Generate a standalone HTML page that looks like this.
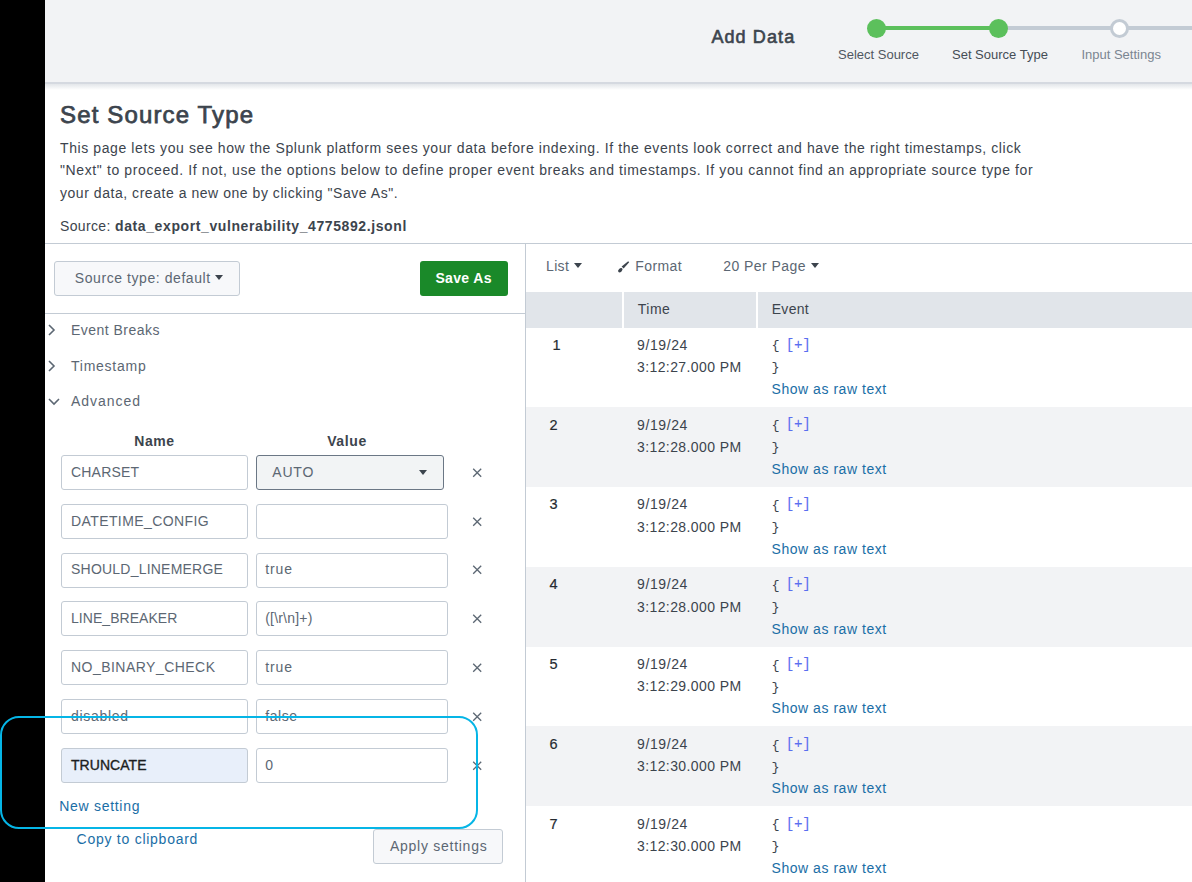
<!DOCTYPE html>
<html><head><meta charset="utf-8"><style>
html,body{margin:0;padding:0;width:1192px;height:882px;overflow:hidden;background:#fff;position:relative}
body>div,body>svg{position:absolute}
.t{white-space:nowrap;font-family:"Liberation Sans",sans-serif}
</style></head><body>
<div style="left:0px;top:0px;width:45px;height:882px;background:#000"></div>
<div style="left:45px;top:0px;width:1147px;height:82px;background:#f2f3f5"></div>
<div style="left:45px;top:82px;width:1147px;height:2px;background:#d5d9e0"></div>
<div style="left:45px;top:84px;width:1147px;height:6px;background:linear-gradient(#e3e6ea,#ffffff)"></div>
<div class="t" style="left:711.4px;top:28.00px;font-size:18px;line-height:18px;font-weight:400;color:#3c444d;letter-spacing:1.1px;font-family:'Liberation Sans',sans-serif;-webkit-text-stroke:0.6px #3c444d">Add Data</div>
<div style="left:876px;top:26.3px;width:122px;height:3.4px;background:#5cc05c"></div>
<div style="left:998px;top:26.3px;width:194px;height:3.4px;background:#c3cbd4"></div>
<div style="left:867.2px;top:18.7px;width:19px;height:19px;background:#5cc05c;border-radius:50%"></div>
<div style="left:989.1px;top:18.7px;width:19px;height:19px;background:#5cc05c;border-radius:50%"></div>
<div style="left:1109.5px;top:18.7px;width:19px;height:19px;background:#fff;border:3.3px solid #c3cbd4;border-radius:50%;box-sizing:border-box"></div>
<div class="t" style="left:838px;top:48.00px;font-size:13px;line-height:13px;font-weight:400;color:#4f5761;letter-spacing:0px;font-family:'Liberation Sans',sans-serif;">Select Source</div>
<div class="t" style="left:952px;top:48.00px;font-size:13px;line-height:13px;font-weight:400;color:#454d56;letter-spacing:0px;font-family:'Liberation Sans',sans-serif;">Set Source Type</div>
<div class="t" style="left:1081.4px;top:48.00px;font-size:13px;line-height:13px;font-weight:400;color:#7b8591;letter-spacing:0px;font-family:'Liberation Sans',sans-serif;">Input Settings</div>
<div class="t" style="left:60px;top:103.00px;font-size:24px;line-height:24px;font-weight:400;color:#3c444d;letter-spacing:1.15px;font-family:'Liberation Sans',sans-serif;-webkit-text-stroke:0.75px #3c444d">Set Source Type</div>
<div class="t" style="left:60px;top:141.10px;font-size:14px;line-height:14px;font-weight:400;color:#3c444d;letter-spacing:0.6px;font-family:'Liberation Sans',sans-serif;">This page lets you see how the Splunk platform sees your data before indexing. If the events look correct and have the right timestamps, click</div>
<div class="t" style="left:60px;top:163.30px;font-size:14px;line-height:14px;font-weight:400;color:#3c444d;letter-spacing:0.615px;font-family:'Liberation Sans',sans-serif;">&quot;Next&quot; to proceed. If not, use the options below to define proper event breaks and timestamps. If you cannot find an appropriate source type for</div>
<div class="t" style="left:60px;top:185.50px;font-size:14px;line-height:14px;font-weight:400;color:#3c444d;letter-spacing:0.54px;font-family:'Liberation Sans',sans-serif;">your data, create a new one by clicking &quot;Save As&quot;.</div>
<div class="t" style="left:60px;top:218.70px;font-size:14px;line-height:14px;font-weight:400;color:#3c444d;letter-spacing:0.36px;font-family:'Liberation Sans',sans-serif;">Source: <b style="letter-spacing:0.6px">data_export_vulnerability_4775892.jsonl</b></div>
<div style="left:45px;top:243px;width:1147px;height:1px;background:#c3cbd4"></div>
<div style="left:525px;top:243px;width:1px;height:639px;background:#c3cbd4"></div>
<div style="left:45px;top:313px;width:480px;height:1px;background:#c3cbd4"></div>
<div style="left:54px;top:261px;width:186px;height:35px;background:#f7f8fa;border:1px solid #c3cbd4;border-radius:3px;box-sizing:border-box"></div>
<div class="t" style="left:74.8px;top:270.80px;font-size:14px;line-height:14px;font-weight:400;color:#5c6773;letter-spacing:0.57px;font-family:'Liberation Sans',sans-serif;">Source type: default</div>
<div style="left:215px;top:275px;width:0;height:0;border-left:4px solid transparent;border-right:4px solid transparent;border-top:5px solid #3c444d"></div>
<div style="left:420px;top:261px;width:88px;height:35px;background:#1a8929;border-radius:3px"></div>
<div class="t" style="left:435.4px;top:270.90px;font-size:14px;line-height:14px;font-weight:700;color:#fff;letter-spacing:0.35px;font-family:'Liberation Sans',sans-serif;">Save As</div>
<svg style="left:47px;top:323px" width="10" height="14"><path d="M2 2 L7 7 L2 12" fill="none" stroke="#5c6773" stroke-width="1.6"/></svg>
<div class="t" style="left:71px;top:322.90px;font-size:14px;line-height:14px;font-weight:400;color:#5c6773;letter-spacing:0.47px;font-family:'Liberation Sans',sans-serif;">Event Breaks</div>
<svg style="left:47px;top:359px" width="10" height="14"><path d="M2 2 L7 7 L2 12" fill="none" stroke="#5c6773" stroke-width="1.6"/></svg>
<div class="t" style="left:71px;top:358.70px;font-size:14px;line-height:14px;font-weight:400;color:#5c6773;letter-spacing:0.75px;font-family:'Liberation Sans',sans-serif;">Timestamp</div>
<svg style="left:47px;top:397px" width="14" height="10"><path d="M2 2 L7 7 L12 2" fill="none" stroke="#5c6773" stroke-width="1.6"/></svg>
<div class="t" style="left:71px;top:393.80px;font-size:14px;line-height:14px;font-weight:400;color:#5c6773;letter-spacing:0.95px;font-family:'Liberation Sans',sans-serif;">Advanced</div>
<div class="t" style="left:134.2px;top:433.80px;font-size:14px;line-height:14px;font-weight:700;color:#3c444d;letter-spacing:0.6px;font-family:'Liberation Sans',sans-serif;">Name</div>
<div class="t" style="left:327.2px;top:434.00px;font-size:14px;line-height:14px;font-weight:700;color:#3c444d;letter-spacing:0.6px;font-family:'Liberation Sans',sans-serif;">Value</div>
<div style="left:61px;top:455px;width:187px;height:35px;background:#fff;border:1px solid #c3cbd4;border-radius:3px;box-sizing:border-box"></div>
<div class="t" style="left:71px;top:464.80px;font-size:14px;line-height:14px;font-weight:400;color:#5c6773;letter-spacing:0.2px;font-family:'Liberation Sans',sans-serif;">CHARSET</div>
<div style="left:256px;top:455px;width:188px;height:35px;background:#f2f4f5;border:1px solid #6b7785;border-radius:3px;box-sizing:border-box"></div>
<div class="t" style="left:272.3px;top:464.80px;font-size:14px;line-height:14px;font-weight:400;color:#5c6773;letter-spacing:0.8px;font-family:'Liberation Sans',sans-serif;">AUTO</div>
<div style="left:419px;top:470px;width:0;height:0;border-left:4.5px solid transparent;border-right:4.5px solid transparent;border-top:5px solid #3c444d"></div>
<svg style="left:472px;top:466.8px" width="11" height="11"><path d="M1.2 1.8 L9.2 9.8 M9.2 1.8 L1.2 9.8" stroke="#5c6773" stroke-width="1.3"/></svg>
<div style="left:61px;top:504px;width:187px;height:35px;background:#fff;border:1px solid #c3cbd4;border-radius:3px;box-sizing:border-box"></div>
<div class="t" style="left:71px;top:513.60px;font-size:14px;line-height:14px;font-weight:400;color:#5c6773;letter-spacing:0.4px;font-family:'Liberation Sans',sans-serif;">DATETIME_CONFIG</div>
<div style="left:256px;top:504px;width:192px;height:35px;background:#fff;border:1px solid #c3cbd4;border-radius:3px;box-sizing:border-box"></div>
<svg style="left:472px;top:515.6px" width="11" height="11"><path d="M1.2 1.8 L9.2 9.8 M9.2 1.8 L1.2 9.8" stroke="#5c6773" stroke-width="1.3"/></svg>
<div style="left:61px;top:553px;width:187px;height:35px;background:#fff;border:1px solid #c3cbd4;border-radius:3px;box-sizing:border-box"></div>
<div class="t" style="left:71px;top:562.40px;font-size:14px;line-height:14px;font-weight:400;color:#5c6773;letter-spacing:0.22px;font-family:'Liberation Sans',sans-serif;">SHOULD_LINEMERGE</div>
<div style="left:256px;top:553px;width:192px;height:35px;background:#fff;border:1px solid #c3cbd4;border-radius:3px;box-sizing:border-box"></div>
<div class="t" style="left:265.2px;top:562.40px;font-size:14px;line-height:14px;font-weight:400;color:#5c6773;letter-spacing:0.9px;font-family:'Liberation Sans',sans-serif;">true</div>
<svg style="left:472px;top:564.4px" width="11" height="11"><path d="M1.2 1.8 L9.2 9.8 M9.2 1.8 L1.2 9.8" stroke="#5c6773" stroke-width="1.3"/></svg>
<div style="left:61px;top:601px;width:187px;height:35px;background:#fff;border:1px solid #c3cbd4;border-radius:3px;box-sizing:border-box"></div>
<div class="t" style="left:71px;top:611.20px;font-size:14px;line-height:14px;font-weight:400;color:#5c6773;letter-spacing:0.05px;font-family:'Liberation Sans',sans-serif;">LINE_BREAKER</div>
<div style="left:256px;top:601px;width:192px;height:35px;background:#fff;border:1px solid #c3cbd4;border-radius:3px;box-sizing:border-box"></div>
<div class="t" style="left:265.2px;top:611.20px;font-size:14px;line-height:14px;font-weight:400;color:#5c6773;letter-spacing:0.2px;font-family:'Liberation Sans',sans-serif;">([\r\n]+)</div>
<svg style="left:472px;top:613.2px" width="11" height="11"><path d="M1.2 1.8 L9.2 9.8 M9.2 1.8 L1.2 9.8" stroke="#5c6773" stroke-width="1.3"/></svg>
<div style="left:61px;top:650px;width:187px;height:35px;background:#fff;border:1px solid #c3cbd4;border-radius:3px;box-sizing:border-box"></div>
<div class="t" style="left:71px;top:660.00px;font-size:14px;line-height:14px;font-weight:400;color:#5c6773;letter-spacing:0.47px;font-family:'Liberation Sans',sans-serif;">NO_BINARY_CHECK</div>
<div style="left:256px;top:650px;width:192px;height:35px;background:#fff;border:1px solid #c3cbd4;border-radius:3px;box-sizing:border-box"></div>
<div class="t" style="left:265.2px;top:660.00px;font-size:14px;line-height:14px;font-weight:400;color:#5c6773;letter-spacing:0.9px;font-family:'Liberation Sans',sans-serif;">true</div>
<svg style="left:472px;top:662.0px" width="11" height="11"><path d="M1.2 1.8 L9.2 9.8 M9.2 1.8 L1.2 9.8" stroke="#5c6773" stroke-width="1.3"/></svg>
<div style="left:61px;top:699px;width:187px;height:35px;background:#fff;border:1px solid #c3cbd4;border-radius:3px;box-sizing:border-box"></div>
<div class="t" style="left:71px;top:708.80px;font-size:14px;line-height:14px;font-weight:400;color:#5c6773;letter-spacing:0.7px;font-family:'Liberation Sans',sans-serif;">disabled</div>
<div style="left:256px;top:699px;width:192px;height:35px;background:#fff;border:1px solid #c3cbd4;border-radius:3px;box-sizing:border-box"></div>
<div class="t" style="left:265.2px;top:708.80px;font-size:14px;line-height:14px;font-weight:400;color:#5c6773;letter-spacing:0.6px;font-family:'Liberation Sans',sans-serif;">false</div>
<svg style="left:472px;top:710.8px" width="11" height="11"><path d="M1.2 1.8 L9.2 9.8 M9.2 1.8 L1.2 9.8" stroke="#5c6773" stroke-width="1.3"/></svg>
<div style="left:61px;top:748px;width:187px;height:35px;background:#e8effa;border:1px solid #c3cbd4;border-radius:3px;box-sizing:border-box"></div>
<div class="t" style="left:71px;top:757.60px;font-size:14px;line-height:14px;font-weight:400;color:#1c1e21;letter-spacing:0.05px;font-family:'Liberation Sans',sans-serif;-webkit-text-stroke:0.35px #1c1e21">TRUNCATE</div>
<div style="left:256px;top:748px;width:192px;height:35px;background:#fff;border:1px solid #c3cbd4;border-radius:3px;box-sizing:border-box"></div>
<div class="t" style="left:265.2px;top:757.60px;font-size:14px;line-height:14px;font-weight:400;color:#5c6773;letter-spacing:0.2px;font-family:'Liberation Sans',sans-serif;">0</div>
<svg style="left:472px;top:759.5999999999999px" width="11" height="11"><path d="M1.2 1.8 L9.2 9.8 M9.2 1.8 L1.2 9.8" stroke="#5c6773" stroke-width="1.3"/></svg>
<div class="t" style="left:59.3px;top:799.30px;font-size:14px;line-height:14px;font-weight:400;color:#1a6ea6;letter-spacing:0.7px;font-family:'Liberation Sans',sans-serif;">New setting</div>
<div class="t" style="left:76.6px;top:832.30px;font-size:14px;line-height:14px;font-weight:400;color:#1a6ea6;letter-spacing:0.74px;font-family:'Liberation Sans',sans-serif;">Copy to clipboard</div>
<div style="left:373px;top:829px;width:130px;height:35px;background:#f7f8fa;border:1px solid #c3cbd4;border-radius:3px;box-sizing:border-box"></div>
<div class="t" style="left:390px;top:839.00px;font-size:14px;line-height:14px;font-weight:400;color:#5c6773;letter-spacing:0.73px;font-family:'Liberation Sans',sans-serif;">Apply settings</div>
<div class="t" style="left:546.1px;top:258.60px;font-size:14px;line-height:14px;font-weight:400;color:#5c6773;letter-spacing:0.3px;font-family:'Liberation Sans',sans-serif;">List</div>
<div style="left:574px;top:263.4px;width:0;height:0;border-left:4px solid transparent;border-right:4px solid transparent;border-top:5px solid #3c444d"></div>
<svg style="left:612px;top:255px" width="22" height="22"><path d="M16.2 6.2 L17.2 7.2 L11.6 13.4 L9.6 11.6 Z" fill="#3c444d"/><ellipse cx="8.3" cy="15.2" rx="2.6" ry="1.7" transform="rotate(-45 8.3 15.2)" fill="#3c444d"/></svg>
<div class="t" style="left:635.2px;top:259.30px;font-size:14px;line-height:14px;font-weight:400;color:#5c6773;letter-spacing:0.43px;font-family:'Liberation Sans',sans-serif;">Format</div>
<div class="t" style="left:723.2px;top:258.80px;font-size:14px;line-height:14px;font-weight:400;color:#5c6773;letter-spacing:0.44px;font-family:'Liberation Sans',sans-serif;">20 Per Page</div>
<div style="left:811px;top:263.4px;width:0;height:0;border-left:4px solid transparent;border-right:4px solid transparent;border-top:5px solid #3c444d"></div>
<div style="left:526px;top:292px;width:666px;height:36px;background:#e1e5ea"></div>
<div style="left:622px;top:292px;width:2px;height:36px;background:#fff"></div>
<div style="left:756px;top:292px;width:2px;height:36px;background:#fff"></div>
<div class="t" style="left:637.8px;top:302.00px;font-size:14px;line-height:14px;font-weight:400;color:#3c444d;letter-spacing:0.5px;font-family:'Liberation Sans',sans-serif;">Time</div>
<div class="t" style="left:771.7px;top:302.00px;font-size:14px;line-height:14px;font-weight:400;color:#3c444d;letter-spacing:0.3px;font-family:'Liberation Sans',sans-serif;">Event</div>
<div class="t" style="left:552.5px;top:337.80px;font-size:14.5px;line-height:14.5px;font-weight:400;color:#262b31;letter-spacing:0px;font-family:'Liberation Sans',sans-serif;-webkit-text-stroke:0.2px #262b31">1</div>
<div class="t" style="left:637px;top:337.80px;font-size:14px;line-height:14px;font-weight:400;color:#3c444d;letter-spacing:0.6px;font-family:'Liberation Sans',sans-serif;">9/19/24</div>
<div class="t" style="left:637px;top:360.00px;font-size:14px;line-height:14px;font-weight:400;color:#3c444d;letter-spacing:0.4px;font-family:'Liberation Sans',sans-serif;">3:12:27.000 PM</div>
<div class="t" style="left:771.5px;top:339.30px;font-size:13.5px;line-height:13.5px;font-weight:400;color:#3c444d;letter-spacing:0px;font-family:'Liberation Mono',monospace;">{</div>
<div class="t" style="left:785.8px;top:337.60px;font-size:14.2px;line-height:14.2px;font-weight:400;color:#5a6ef0;letter-spacing:-0.3px;font-family:'Liberation Mono',monospace;-webkit-text-stroke:0.1px #5a6ef0">[+]</div>
<div class="t" style="left:771.5px;top:361.30px;font-size:13.5px;line-height:13.5px;font-weight:400;color:#3c444d;letter-spacing:0px;font-family:'Liberation Mono',monospace;">}</div>
<div class="t" style="left:771.5px;top:382.00px;font-size:14px;line-height:14px;font-weight:400;color:#1a6ea6;letter-spacing:0.54px;font-family:'Liberation Sans',sans-serif;">Show as raw text</div>
<div style="left:526px;top:407px;width:666px;height:80px;background:#f2f3f5"></div>
<div class="t" style="left:549.4px;top:417.64px;font-size:14.5px;line-height:14.5px;font-weight:400;color:#262b31;letter-spacing:0px;font-family:'Liberation Sans',sans-serif;-webkit-text-stroke:0.2px #262b31">2</div>
<div class="t" style="left:637px;top:417.64px;font-size:14px;line-height:14px;font-weight:400;color:#3c444d;letter-spacing:0.6px;font-family:'Liberation Sans',sans-serif;">9/19/24</div>
<div class="t" style="left:637px;top:439.84px;font-size:14px;line-height:14px;font-weight:400;color:#3c444d;letter-spacing:0.4px;font-family:'Liberation Sans',sans-serif;">3:12:28.000 PM</div>
<div class="t" style="left:771.5px;top:419.14px;font-size:13.5px;line-height:13.5px;font-weight:400;color:#3c444d;letter-spacing:0px;font-family:'Liberation Mono',monospace;">{</div>
<div class="t" style="left:785.8px;top:417.44px;font-size:14.2px;line-height:14.2px;font-weight:400;color:#5a6ef0;letter-spacing:-0.3px;font-family:'Liberation Mono',monospace;-webkit-text-stroke:0.1px #5a6ef0">[+]</div>
<div class="t" style="left:771.5px;top:441.14px;font-size:13.5px;line-height:13.5px;font-weight:400;color:#3c444d;letter-spacing:0px;font-family:'Liberation Mono',monospace;">}</div>
<div class="t" style="left:771.5px;top:461.84px;font-size:14px;line-height:14px;font-weight:400;color:#1a6ea6;letter-spacing:0.54px;font-family:'Liberation Sans',sans-serif;">Show as raw text</div>
<div class="t" style="left:549.4px;top:497.48px;font-size:14.5px;line-height:14.5px;font-weight:400;color:#262b31;letter-spacing:0px;font-family:'Liberation Sans',sans-serif;-webkit-text-stroke:0.2px #262b31">3</div>
<div class="t" style="left:637px;top:497.48px;font-size:14px;line-height:14px;font-weight:400;color:#3c444d;letter-spacing:0.6px;font-family:'Liberation Sans',sans-serif;">9/19/24</div>
<div class="t" style="left:637px;top:519.68px;font-size:14px;line-height:14px;font-weight:400;color:#3c444d;letter-spacing:0.4px;font-family:'Liberation Sans',sans-serif;">3:12:28.000 PM</div>
<div class="t" style="left:771.5px;top:498.98px;font-size:13.5px;line-height:13.5px;font-weight:400;color:#3c444d;letter-spacing:0px;font-family:'Liberation Mono',monospace;">{</div>
<div class="t" style="left:785.8px;top:497.28px;font-size:14.2px;line-height:14.2px;font-weight:400;color:#5a6ef0;letter-spacing:-0.3px;font-family:'Liberation Mono',monospace;-webkit-text-stroke:0.1px #5a6ef0">[+]</div>
<div class="t" style="left:771.5px;top:520.98px;font-size:13.5px;line-height:13.5px;font-weight:400;color:#3c444d;letter-spacing:0px;font-family:'Liberation Mono',monospace;">}</div>
<div class="t" style="left:771.5px;top:541.68px;font-size:14px;line-height:14px;font-weight:400;color:#1a6ea6;letter-spacing:0.54px;font-family:'Liberation Sans',sans-serif;">Show as raw text</div>
<div style="left:526px;top:567px;width:666px;height:80px;background:#f2f3f5"></div>
<div class="t" style="left:549.4px;top:577.32px;font-size:14.5px;line-height:14.5px;font-weight:400;color:#262b31;letter-spacing:0px;font-family:'Liberation Sans',sans-serif;-webkit-text-stroke:0.2px #262b31">4</div>
<div class="t" style="left:637px;top:577.32px;font-size:14px;line-height:14px;font-weight:400;color:#3c444d;letter-spacing:0.6px;font-family:'Liberation Sans',sans-serif;">9/19/24</div>
<div class="t" style="left:637px;top:599.52px;font-size:14px;line-height:14px;font-weight:400;color:#3c444d;letter-spacing:0.4px;font-family:'Liberation Sans',sans-serif;">3:12:28.000 PM</div>
<div class="t" style="left:771.5px;top:578.82px;font-size:13.5px;line-height:13.5px;font-weight:400;color:#3c444d;letter-spacing:0px;font-family:'Liberation Mono',monospace;">{</div>
<div class="t" style="left:785.8px;top:577.12px;font-size:14.2px;line-height:14.2px;font-weight:400;color:#5a6ef0;letter-spacing:-0.3px;font-family:'Liberation Mono',monospace;-webkit-text-stroke:0.1px #5a6ef0">[+]</div>
<div class="t" style="left:771.5px;top:600.82px;font-size:13.5px;line-height:13.5px;font-weight:400;color:#3c444d;letter-spacing:0px;font-family:'Liberation Mono',monospace;">}</div>
<div class="t" style="left:771.5px;top:621.52px;font-size:14px;line-height:14px;font-weight:400;color:#1a6ea6;letter-spacing:0.54px;font-family:'Liberation Sans',sans-serif;">Show as raw text</div>
<div class="t" style="left:549.4px;top:657.16px;font-size:14.5px;line-height:14.5px;font-weight:400;color:#262b31;letter-spacing:0px;font-family:'Liberation Sans',sans-serif;-webkit-text-stroke:0.2px #262b31">5</div>
<div class="t" style="left:637px;top:657.16px;font-size:14px;line-height:14px;font-weight:400;color:#3c444d;letter-spacing:0.6px;font-family:'Liberation Sans',sans-serif;">9/19/24</div>
<div class="t" style="left:637px;top:679.36px;font-size:14px;line-height:14px;font-weight:400;color:#3c444d;letter-spacing:0.4px;font-family:'Liberation Sans',sans-serif;">3:12:29.000 PM</div>
<div class="t" style="left:771.5px;top:658.66px;font-size:13.5px;line-height:13.5px;font-weight:400;color:#3c444d;letter-spacing:0px;font-family:'Liberation Mono',monospace;">{</div>
<div class="t" style="left:785.8px;top:656.96px;font-size:14.2px;line-height:14.2px;font-weight:400;color:#5a6ef0;letter-spacing:-0.3px;font-family:'Liberation Mono',monospace;-webkit-text-stroke:0.1px #5a6ef0">[+]</div>
<div class="t" style="left:771.5px;top:680.66px;font-size:13.5px;line-height:13.5px;font-weight:400;color:#3c444d;letter-spacing:0px;font-family:'Liberation Mono',monospace;">}</div>
<div class="t" style="left:771.5px;top:701.36px;font-size:14px;line-height:14px;font-weight:400;color:#1a6ea6;letter-spacing:0.54px;font-family:'Liberation Sans',sans-serif;">Show as raw text</div>
<div style="left:526px;top:726px;width:666px;height:80px;background:#f2f3f5"></div>
<div class="t" style="left:549.4px;top:737.00px;font-size:14.5px;line-height:14.5px;font-weight:400;color:#262b31;letter-spacing:0px;font-family:'Liberation Sans',sans-serif;-webkit-text-stroke:0.2px #262b31">6</div>
<div class="t" style="left:637px;top:737.00px;font-size:14px;line-height:14px;font-weight:400;color:#3c444d;letter-spacing:0.6px;font-family:'Liberation Sans',sans-serif;">9/19/24</div>
<div class="t" style="left:637px;top:759.20px;font-size:14px;line-height:14px;font-weight:400;color:#3c444d;letter-spacing:0.4px;font-family:'Liberation Sans',sans-serif;">3:12:30.000 PM</div>
<div class="t" style="left:771.5px;top:738.50px;font-size:13.5px;line-height:13.5px;font-weight:400;color:#3c444d;letter-spacing:0px;font-family:'Liberation Mono',monospace;">{</div>
<div class="t" style="left:785.8px;top:736.80px;font-size:14.2px;line-height:14.2px;font-weight:400;color:#5a6ef0;letter-spacing:-0.3px;font-family:'Liberation Mono',monospace;-webkit-text-stroke:0.1px #5a6ef0">[+]</div>
<div class="t" style="left:771.5px;top:760.50px;font-size:13.5px;line-height:13.5px;font-weight:400;color:#3c444d;letter-spacing:0px;font-family:'Liberation Mono',monospace;">}</div>
<div class="t" style="left:771.5px;top:781.20px;font-size:14px;line-height:14px;font-weight:400;color:#1a6ea6;letter-spacing:0.54px;font-family:'Liberation Sans',sans-serif;">Show as raw text</div>
<div class="t" style="left:549.4px;top:816.84px;font-size:14.5px;line-height:14.5px;font-weight:400;color:#262b31;letter-spacing:0px;font-family:'Liberation Sans',sans-serif;-webkit-text-stroke:0.2px #262b31">7</div>
<div class="t" style="left:637px;top:816.84px;font-size:14px;line-height:14px;font-weight:400;color:#3c444d;letter-spacing:0.6px;font-family:'Liberation Sans',sans-serif;">9/19/24</div>
<div class="t" style="left:637px;top:839.04px;font-size:14px;line-height:14px;font-weight:400;color:#3c444d;letter-spacing:0.4px;font-family:'Liberation Sans',sans-serif;">3:12:30.000 PM</div>
<div class="t" style="left:771.5px;top:818.34px;font-size:13.5px;line-height:13.5px;font-weight:400;color:#3c444d;letter-spacing:0px;font-family:'Liberation Mono',monospace;">{</div>
<div class="t" style="left:785.8px;top:816.64px;font-size:14.2px;line-height:14.2px;font-weight:400;color:#5a6ef0;letter-spacing:-0.3px;font-family:'Liberation Mono',monospace;-webkit-text-stroke:0.1px #5a6ef0">[+]</div>
<div class="t" style="left:771.5px;top:840.34px;font-size:13.5px;line-height:13.5px;font-weight:400;color:#3c444d;letter-spacing:0px;font-family:'Liberation Mono',monospace;">}</div>
<div class="t" style="left:771.5px;top:861.04px;font-size:14px;line-height:14px;font-weight:400;color:#1a6ea6;letter-spacing:0.54px;font-family:'Liberation Sans',sans-serif;">Show as raw text</div>
<div style="left:0px;top:716px;width:478px;height:112.5px;border:2px solid #05b5e6;border-radius:19px;box-sizing:border-box"></div>
</body></html>
